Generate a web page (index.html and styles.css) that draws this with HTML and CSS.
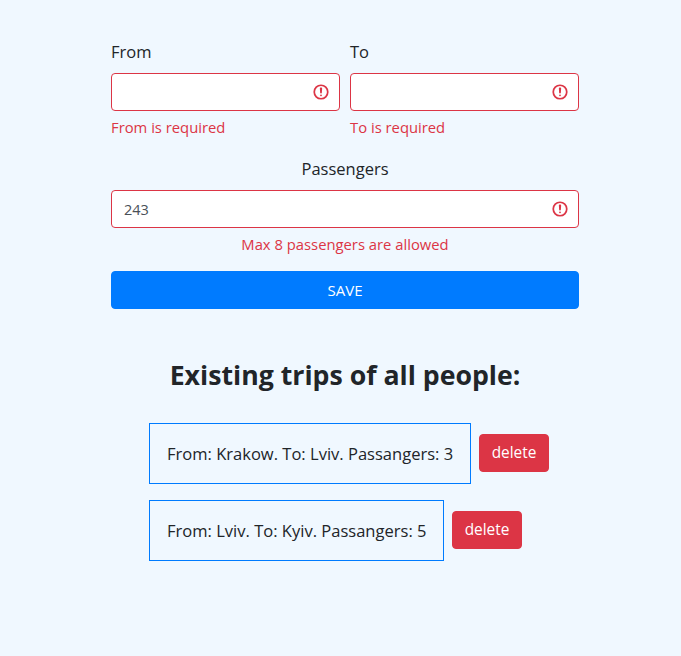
FILE: index.html
```html
<!DOCTYPE html>
<html lang="en">
<head>
    <meta charset="UTF-8">
    <meta name="viewport" content="width=device-width, initial-scale=1.0">
    <title>Trips</title>
    <link rel="stylesheet" href="styles.css">
</head>
<body>
    <div class="page">
        <form class="trip-form">
            <div class="form-row">
                <div class="form-group">
                    <label class="form-label" for="from">From</label>
                    <div class="input-wrap">
                        <input class="form-input" id="from" type="text">
                        <svg class="invalid-icon" viewBox="0 0 12 12" width="18" height="18" fill="none" stroke="#dc3545">
                            <circle cx="6" cy="6" r="4.5"/>
                            <path stroke-linejoin="round" d="M5.8 3.6h.4L6 6.5z"/>
                            <circle cx="6" cy="8.2" r=".6" fill="#dc3545" stroke="none"/>
                        </svg>
                    </div>
                    <div class="form-error">From is required</div>
                </div>
                <div class="form-group">
                    <label class="form-label" for="to">To</label>
                    <div class="input-wrap">
                        <input class="form-input" id="to" type="text">
                        <svg class="invalid-icon" viewBox="0 0 12 12" width="18" height="18" fill="none" stroke="#dc3545">
                            <circle cx="6" cy="6" r="4.5"/>
                            <path stroke-linejoin="round" d="M5.8 3.6h.4L6 6.5z"/>
                            <circle cx="6" cy="8.2" r=".6" fill="#dc3545" stroke="none"/>
                        </svg>
                    </div>
                    <div class="form-error">To is required</div>
                </div>
            </div>
            <div class="form-group form-group-center">
                <label class="form-label" for="passengers">Passengers</label>
                <div class="input-wrap">
                    <input class="form-input" id="passengers" type="text" value="243">
                    <svg class="invalid-icon" viewBox="0 0 12 12" width="18" height="18" fill="none" stroke="#dc3545">
                        <circle cx="6" cy="6" r="4.5"/>
                        <path stroke-linejoin="round" d="M5.8 3.6h.4L6 6.5z"/>
                        <circle cx="6" cy="8.2" r=".6" fill="#dc3545" stroke="none"/>
                    </svg>
                </div>
                <div class="form-error">Max 8 passengers are allowed</div>
            </div>
            <button class="save-button" type="button">SAVE</button>
        </form>

        <h2 class="trips-title">Existing trips of all people:</h2>

        <div class="trips">
            <div class="trip">
                <div class="trip-text">From: Krakow. To: Lviv. Passangers: 3</div>
                <button class="delete-button" type="button">delete</button>
            </div>
            <div class="trip">
                <div class="trip-text">From: Lviv. To: Kyiv. Passangers: 5</div>
                <button class="delete-button" type="button">delete</button>
            </div>
        </div>
    </div>
</body>
</html>
```

FILE: styles.css
```css
* {
    box-sizing: border-box;
}

body {
    margin: 0;
    min-height: 656px;
    background: #f0f8ff;
    color: #212529;
    font-family: "Open Sans", sans-serif;
    font-size: 16.5px;
    line-height: 24px;
}

.page {
    width: 468px;
    margin-left: 111px;
    padding-top: 40px;
}

.form-row {
    display: flex;
    gap: 10px;
    margin-bottom: 18px;
}

.form-group {
    flex: 1;
}

.form-group-center {
    text-align: center;
    margin-bottom: 15px;
}

.form-label {
    display: block;
    margin-bottom: 9px;
}

.input-wrap {
    position: relative;
}

.form-input {
    display: block;
    width: 100%;
    height: 38px;
    padding: 6px 36px 6px 12px;
    background: #fff;
    border: 1px solid #dc3545;
    border-radius: 4px;
    color: #495057;
    font: inherit;
    font-size: 14.5px;
}

.invalid-icon {
    position: absolute;
    top: 10px;
    right: 10px;
    stroke-width: 1.15;
}

.form-error {
    margin-top: 4px;
    color: #dc3545;
    font-size: 14.8px;
}

.save-button {
    display: block;
    width: 100%;
    height: 38px;
    background: #007bff;
    border: 1px solid #007bff;
    border-radius: 4px;
    color: #fff;
    font: inherit;
    font-size: 15px;
}

.trips-title {
    margin: 46px 0 28px;
    font-size: 26.7px;
    font-weight: 700;
    line-height: 40px;
    text-align: center;
}

.trips {
    display: flex;
    flex-direction: column;
    gap: 16px;
    padding-left: 38px;
}

.trip {
    display: flex;
    align-items: center;
    gap: 8px;
}

.trip-text {
    width: 322px;
    padding: 18px 0 18px 17px;
    border: 1px solid #007bff;
    font-size: 16.55px;
    line-height: 23px;
    white-space: nowrap;
}

.trip:last-child .trip-text {
    width: 295px;
}

.delete-button {
    width: 70px;
    height: 38px;
    margin-bottom: 1px;
    padding: 0;
    background: #dc3545;
    border: 1px solid #dc3545;
    border-radius: 4px;
    color: #fff;
    font: inherit;
    font-size: 15.4px;
}
```
